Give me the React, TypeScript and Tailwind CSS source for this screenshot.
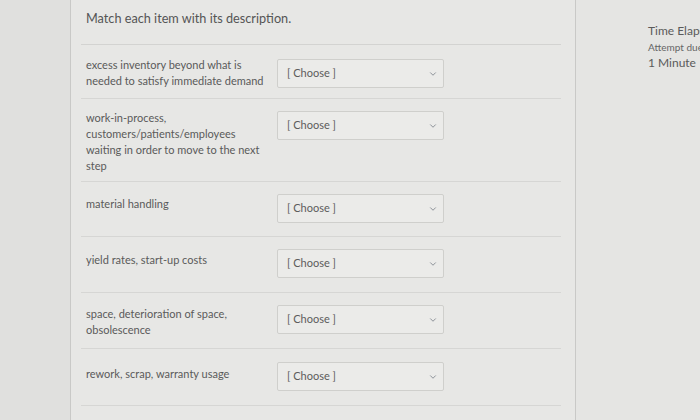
import React from 'react';
import { ChevronDown } from 'lucide-react';

const rows = [
  { text: ['excess inventory beyond what is', 'needed to satisfy immediate demand'], h: 'h-[54px]', pt: 'pt-[12px]', sel: 'mt-[2px]' },
  { text: ['work-in-process,', 'customers/patients/employees', 'waiting in order to move to the next', 'step'], h: 'h-[83px]', pt: 'pt-[11px]', sel: 'mt-[1px]' },
  { text: ['material handling'], h: 'h-[55px]', pt: 'pt-[14px]', sel: 'mt-[-2px]' },
  { text: ['yield rates, start-up costs'], h: 'h-[56px]', pt: 'pt-[15px]', sel: 'mt-[-3px]' },
  { text: ['space, deterioration of space,', 'obsolescence'], h: 'h-[56px]', pt: 'pt-[13px]', sel: 'mt-[-1px]' },
  { text: ['rework, scrap, warranty usage'], h: 'h-[57px]', pt: 'pt-[17px]', sel: 'mt-[-4px]' },
];

function Select({ className }: { className: string }) {
  return (
    <div
      className={`${className} w-[167px] h-[29px] border border-[#cfcfcc] bg-[#ebebe9] rounded-[2px] flex items-center justify-between pl-[9px] pr-[5px] text-[11px] text-[#5c5c5c]`}
    >
      <span>[ Choose ]</span>
      <ChevronDown size={10} strokeWidth={2} className="text-[#7a7f88]" />
    </div>
  );
}

export default function App() {
  return (
    <div
      className="w-[700px] h-[420px] bg-[#e2e2e0] flex overflow-hidden text-[#5a5a5a]"
      style={{ fontFamily: 'Lato, "Open Sans", sans-serif' }}
    >
      <div className="w-[70px] bg-[#e0e0de]" />
      <div className="w-[506px] bg-[#e7e7e5] border-l border-r border-[#c9c9c7] pt-[9px] pl-[10px] pr-[14px]">
        <h1 className="text-[12.7px] pl-[5px] leading-[18px] text-[#555]">Match each item with its description.</h1>
        <div className="mt-[17px] border-t border-[#d3d3d1]">
          {rows.map((r, i) => (
            <div key={i} className={`${r.h} ${r.pt} flex items-start border-b border-[#d6d6d4] pl-[5px]`}>
              <div className="w-[191px] text-[11px] leading-[16px] text-[#5a5a5a]">
                {r.text.map((t, j) => (
                  <div key={j}>{t}</div>
                ))}
              </div>
              <Select className={r.sel} />
            </div>
          ))}
        </div>
      </div>
      <div className="flex-1 bg-[#e5e5e3] pl-[72px] pt-[23px] whitespace-nowrap overflow-hidden">
        <div className="text-[12px] leading-[16px] text-[#5a5a5a]">Time Elapsed:</div>
        <div className="text-[10px] leading-[14px] mt-[1px] text-[#666]">Attempt due</div>
        <div className="text-[12px] leading-[16px] mt-[1px] text-[#5a5a5a]">1 Minute</div>
      </div>
    </div>
  );
}
